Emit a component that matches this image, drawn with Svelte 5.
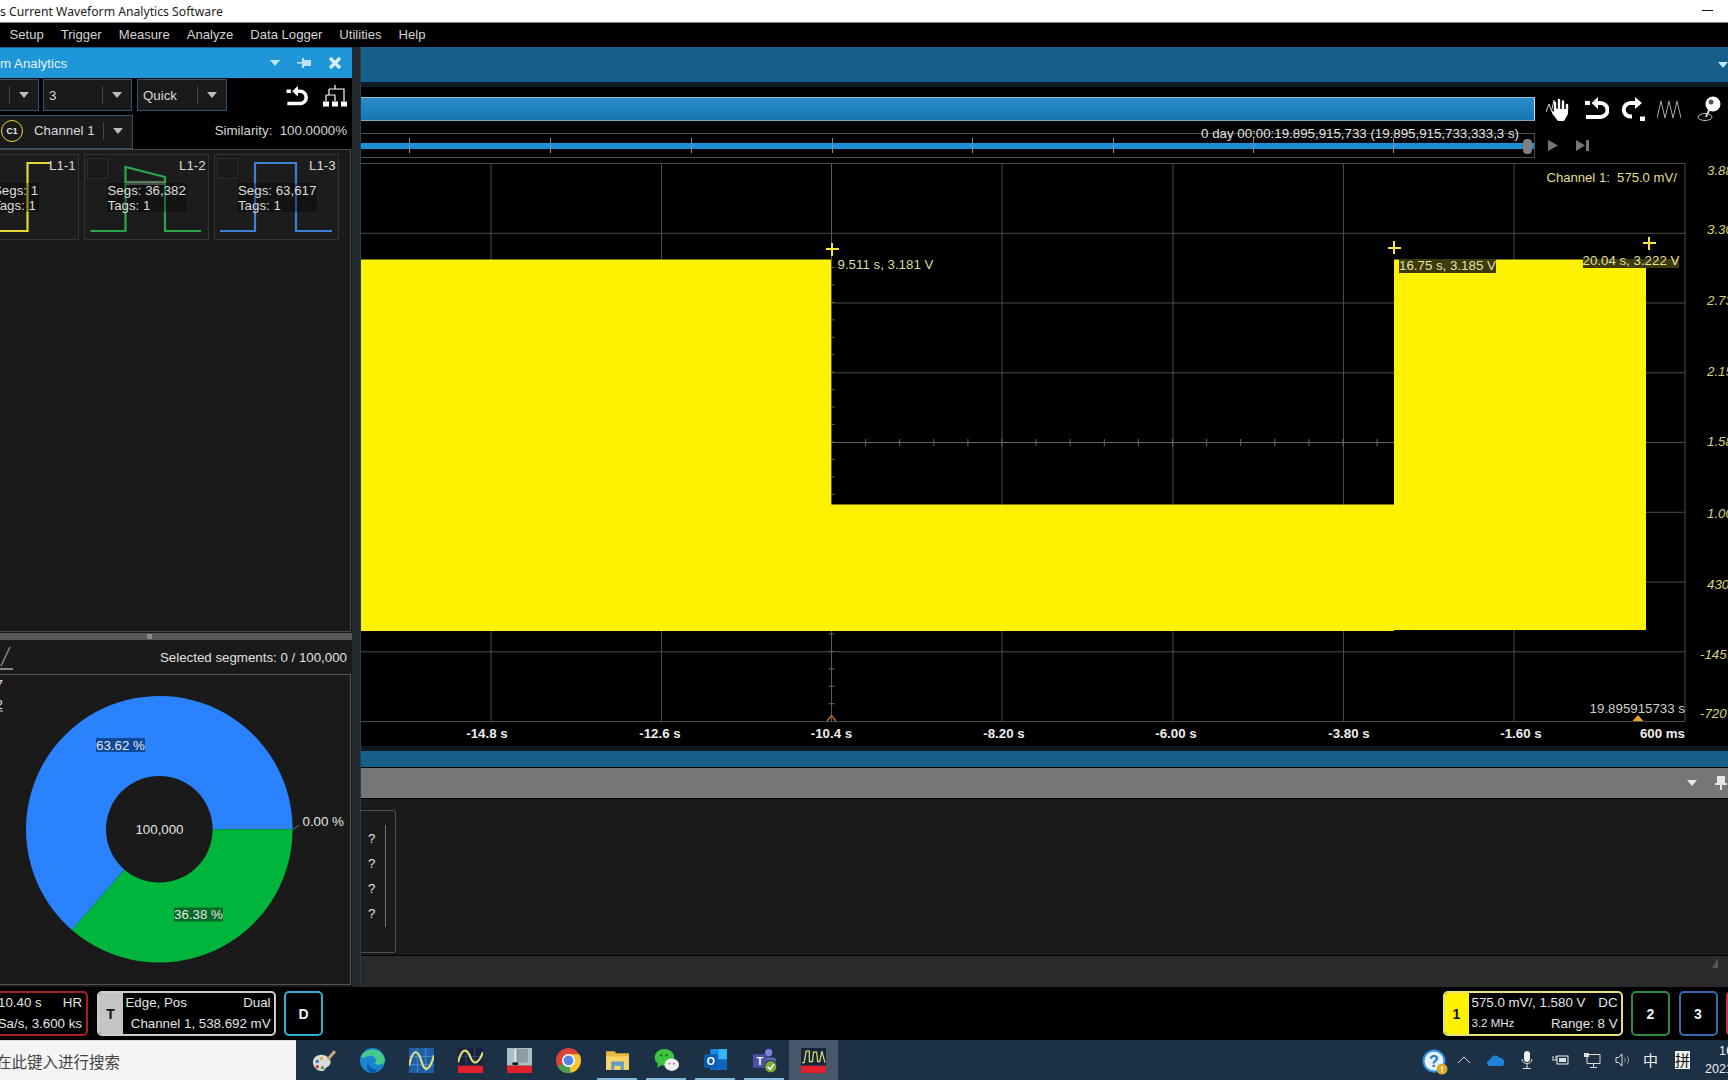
<script>
	const menus = ['Setup', 'Trigger', 'Measure', 'Analyze', 'Data Logger', 'Utilities', 'Help'];

	const thumbs = [
		{ id: 'L1-1', segs: '1', color: '#e6d832', line: 'M6 77H73.5V9H97', left: 38, width: 46 },
		{ id: 'L1-2', segs: '36,382', color: '#2ba64f', line: 'M6.5 77H41.5V13L81 23V77H117', left: 22.5, width: 79 },
		{ id: 'L1-3', segs: '63,617', color: '#3f7fd6', line: 'M6 77H41V9H82V77H118', left: 23, width: 79 }
	];

	// pie, percent of segments from the 3 o'clock point going clockwise
	const cx = 159.3;
	const cy = 155.3;
	const r = 133.3;
	const greenAngle = (36.38 / 100) * 2 * Math.PI;
	const ex = cx + r * Math.cos(greenAngle);
	const ey = cy + r * Math.sin(greenAngle);
	const bluePie = `M${cx + r} ${cy}A${r} ${r} 0 1 0 ${ex} ${ey}L${cx} ${cy}Z`;
	const greenPie = `M${cx + r} ${cy}A${r} ${r} 0 0 1 ${ex} ${ey}L${cx} ${cy}Z`;

	// scope geometry, relative to the plot origin
	const plotRight = 1324;
	const plotBottom = 558;
	const vLines = [130, 300.5, 470.5, 641, 812, 982.5, 1153, 1324];
	const hLines = [0, 69.8, 139.5, 209.3, 279, 348.8, 418.5, 488.3, 558];
	const xLabels = [
		['-14.8 s', 126],
		['-12.6 s', 299],
		['-10.4 s', 470.5],
		['-8.20 s', 643],
		['-6.00 s', 815],
		['-3.80 s', 988],
		['-1.60 s', 1160]
	];
	const yLabels = [
		['3.88 V', 8, 1346],
		['3.30 V', 67, 1346],
		['2.73 V', 138, 1346],
		['2.15 V', 209, 1346],
		['1.58 V', 279, 1346],
		['1.00 V', 351, 1346],
		['430 mV', 422, 1346],
		['-145 mV', 492, 1339],
		['-720 mV', 551, 1339]
	];
	const hTicks = [];
	for (let i = 0; i < 17; i++) hTicks.push(470.5 + i * 34.1);
	const vTicks = [];
	for (let y = 104.5; y < 558; y += 17.45) vTicks.push(y);
	const sliderTicks = [48, 189, 330, 471, 611, 752, 892, 1032];
	const underlined = [2, 3, 4, 5];
</script>

{#snippet dropdown(cls, label)}
	<div class="dropdown {cls}">
		<span class="dd-label">{@render label()}</span>
		<span class="dd-split"></span>
		<span class="dd-arrow"></span>
	</div>
{/snippet}

{#snippet ddEmpty()}{/snippet}
{#snippet ddThree()}3{/snippet}
{#snippet ddQuick()}Quick{/snippet}
{#snippet ddChannel()}<span class="c1">C1</span>Channel 1{/snippet}

{#snippet undoIcon(cls)}
	<svg class={cls} viewBox="0 0 24 24">
		<rect x="0" y="4" width="5" height="4" fill="#fff" />
		<path d="M13 0L6.500 6L13 12Z" fill="#fff" />
		<path d="M11 6H15.500A6.500 6.500 0 0 1 15.500 20H1" fill="none" stroke="#fff" stroke-width="4" />
	</svg>
{/snippet}

<div class="app">
	<header class="titlebar">
		<span>s Current Waveform Analytics Software</span>
		<span class="minimize"></span>
	</header>

	<nav class="menubar">
		{#each menus as m}
			<span>{m}</span>
		{/each}
	</nav>

	<div class="work">
		<aside class="panel">
			<div class="panel-title">
				<span>m Analytics</span>
				<div class="panel-actions">
					<span class="tri-down"></span>
					<svg width="16" height="12" viewBox="0 0 16 12">
						<path d="M0 5H5V6.500H0ZM5 1H7V3H14V9H7V11H5Z" fill="#bfe4f8" />
					</svg>
					<svg width="14" height="14" viewBox="0 0 14 14">
						<path d="M2 2L12 12M12 2L2 12" stroke="#d5eefb" stroke-width="3.400" />
					</svg>
				</div>
			</div>

			<div class="ctl-row first">
				{@render dropdown('dd-a', ddEmpty)}
				{@render dropdown('dd-b', ddThree)}
				{@render dropdown('dd-c', ddQuick)}
				<div class="ctl-icons">
					{@render undoIcon('panel-undo')}
					<svg class="tree" viewBox="0 0 24 22">
						<path d="M12 0V4M6 4H21V16M6 4V10M3 10H12M3 10V16M12 10V16" fill="none" stroke="#fff" stroke-width="1.200" />
						<rect x="0" y="16.500" width="6" height="5" fill="#fff" />
						<rect x="9" y="16.500" width="6" height="5" fill="#fff" />
						<rect x="18" y="16.500" width="6" height="5" fill="#fff" />
					</svg>
				</div>
			</div>

			<div class="ctl-row second">
				{@render dropdown('dd-ch', ddChannel)}
				<span class="similarity">Similarity:&nbsp; 100.0000%</span>
			</div>

			<div class="thumbs">
				{#each thumbs as t}
					<div class="thumb">
						<span class="thumb-check"></span>
						<svg class="thumb-wave" viewBox="0 0 125 86">
							{#if t.id === 'L1-2'}
								<path d="M41.500 29H81" stroke="#5c7a63" stroke-width="4" />
							{/if}
							<path d={t.line} fill="none" stroke={t.color} stroke-width="2.200" />
						</svg>
						<span class="thumb-id">{t.id}</span>
						<div class="thumb-stats" style="left: {t.left}px; width: {t.width}px">
							<div>Segs: {t.segs}</div>
							<div>Tags: 1</div>
						</div>
					</div>
				{/each}
			</div>

			<div class="splitter"><span class="grip"></span></div>

			<div class="seg-row">
				<svg class="seg-icon" width="14" height="26" viewBox="0 0 14 26">
					<path d="M1 21L10 2" stroke="#888" stroke-width="1.500" />
					<path d="M0 24H13" stroke="#888" stroke-width="2" />
				</svg>
				<span>Selected segments: 0 / 100,000</span>
			</div>

			<div class="chart">
				<svg width="351" height="311" viewBox="0 0 351 311">
					<text class="pie-t" x="3" y="15" text-anchor="end">7</text>
					<text class="pie-t" x="3" y="35" text-anchor="end">2</text>
					<path d="M0 37H3" stroke="#ccc" />
					<path d={bluePie} fill="#2a82ff" />
					<path d={greenPie} fill="#00b53c" />
					<circle cx={cx} cy={cy} r="53.300" fill="#1a1a1a" />
					<path d="M293 155.500L299 151" stroke="#777" />
					<rect x="96" y="64" width="49" height="14" fill="#0e4a9a" />
					<rect x="174" y="233.500" width="49" height="14" fill="#006a25" />
					<text class="pie-t" x="96" y="75.500">63.62 %</text>
					<text class="pie-t" x="174" y="245">36.38 %</text>
					<text class="pie-t" x="159.500" y="160" text-anchor="middle">100,000</text>
					<text class="pie-t" x="302.500" y="152">0.00 %</text>
				</svg>
			</div>
		</aside>

		<div class="sep"></div>

		<main class="main">
			<div class="main-head"><span class="tri-down head-arrow"></span></div>
			<div class="band"></div>

			<div class="tools">
				<div class="bars">
					<div class="overview-bar"></div>
					<div class="slider">
						<div class="slider-fill"></div>
						{#each sliderTicks as x}
							<span class="slider-tick" style="left: {x}px"></span>
						{/each}
						<span class="slider-handle"></span>
						<span class="slider-time">0 day 00:00:19.895,915,733 (19.895,915,733,333,3 s)</span>
					</div>
				</div>
				<div class="tool-icons">
					<div class="icon-row">
						<svg class="t-hand" viewBox="0 0 26 25">
							<path d="M0 15L3 7L5.500 14L8 3L10 12" fill="none" stroke="#ccc" stroke-width="1" />
							<path d="M9 13V6M13 12V3M17 12V4.500M21 13V8" stroke="#fff" stroke-width="2.400" stroke-linecap="round" />
							<path d="M8 12H22V17L18 24H12L6.500 17L5 13L8 15Z" fill="#fff" />
						</svg>
						{@render undoIcon('t-undo')}
						<svg class="t-redo" viewBox="0 0 24 24">
							<path d="M15 6H9.500A6.500 6.500 0 0 0 9.500 19.500H11" fill="none" stroke="#fff" stroke-width="4" />
							<path d="M14 0L21 6L14 12Z" fill="#fff" />
							<rect x="19" y="19.500" width="5" height="4.500" fill="#fff" />
						</svg>
						<svg class="t-zig" viewBox="0 0 24 19">
							<path d="M0 18L4 1L8 18L12 1L16 18L20 1L24 18" fill="none" stroke="#aaa" stroke-width="1" />
						</svg>
						<svg class="t-joy" viewBox="0 0 24 26">
							<ellipse cx="8" cy="21" rx="7" ry="3.500" fill="none" stroke="#bbb" stroke-width="1" />
							<path d="M9 21L13 12" stroke="#ccc" stroke-width="2" />
							<circle cx="16" cy="8" r="7.500" fill="#fff" />
							<circle cx="14" cy="6" r="2.500" fill="#555" />
						</svg>
					</div>
					<div class="icon-row small">
						<svg width="10" height="11" viewBox="0 0 10 11"><path d="M0 0L10 5.500L0 11Z" fill="#777" /></svg>
						<svg width="13" height="11" viewBox="0 0 13 11"><path d="M0 0L9 5.500L0 11ZM10 0H13V11H10Z" fill="#777" /></svg>
					</div>
				</div>
			</div>

			<section class="scope">
				<svg class="plot" width="1367" height="583" viewBox="0 0 1367 583">
					{#each vLines as x}
						<path d="M{x} 0V{plotBottom}" stroke="#4c4c4c" />
					{/each}
					{#each hLines as y}
						<path d="M0 {y + 0.5}H{plotRight}" stroke="#4c4c4c" />
					{/each}
					<path d="M470.500 0V{plotBottom}" stroke="#5a5a5a" />
					<path d="M470 279.500H1033" stroke="#666" />
					{#each hTicks as x}
						<path d="M{x} 276V283" stroke="#666" />
					{/each}
					{#each vTicks as y}
						<path d="M467.500 {y}H473.500" stroke="#666" />
					{/each}
					<path d="M0 96.500H470V341.500H1033V96.500H1285V467H1033V468H0Z" fill="#fff200" />
					<path d="M466 558L470.500 552.500L475 558" fill="none" stroke="#b8702a" stroke-width="1.400" />
					<path d="M1271.500 558L1277 552L1282.500 558Z" fill="#e8a030" />
				</svg>

				{#each xLabels as [text, x]}
					<span class="x-label" style="left: {x}px">{text}</span>
				{/each}
				<span class="x-label end">600 ms</span>

				{#each yLabels as [text, y, x]}
					<span class="y-label" style="top: {y - 8}px; left: {x}px">{text}</span>
				{/each}

				<span class="ch-scale">Channel 1:&nbsp; 575.0 mV/</span>
				<span class="time-stamp">19.895915733 s</span>

				<span class="cursor c-a"></span>
				<span class="cursor c-b"></span>
				<span class="cursor c-c"></span>
				<span class="marker m-a">9.511 s, 3.181 V</span>
				<span class="marker m-b">16.75 s, 3.185 V</span>
				<span class="marker m-c">20.04 s, 3.222 V</span>
			</section>

			<div class="band low"></div>
			<div class="blue-strip"></div>
			<div class="gray-head">
				<span class="tri-down"></span>
				<svg width="12" height="14" viewBox="0 0 12 14">
					<path d="M2 0H10V7H12V9H7V14H5V9H0V7H2Z" fill="#e6e6e6" />
				</svg>
			</div>
			<div class="log-body">
				<div class="qbox">
					<div class="qs">
						<span>?</span><span>?</span><span>?</span><span>?</span>
					</div>
					<span class="qline"></span>
				</div>
			</div>
			<div class="log-foot"><span class="foot-grip"></span></div>
		</main>
	</div>

	<footer class="statusbar">
		<div class="status-group left">
			<div class="chip acq">
				<div class="chip-line"><span class="acq-time">10.40 s</span><span>HR</span></div>
				<div class="chip-line end"><span>Sa/s, 3.600 ks</span></div>
			</div>
			<div class="chip trig">
				<span class="tab gray">T</span>
				<div class="chip-text">
					<div class="chip-line"><span>Edge, Pos</span><span>Dual</span></div>
					<div class="chip-line end"><span>Channel 1, 538.692 mV</span></div>
				</div>
			</div>
			<div class="ch-btn cyan">D</div>
		</div>
		<div class="status-group right">
			<div class="chip ch1">
				<span class="tab yellow">1</span>
				<div class="chip-text">
					<div class="chip-line"><span>575.0 mV/, 1.580 V</span><span>DC</span></div>
					<div class="chip-line"><span class="mhz">3.2 MHz</span><span>Range: 8 V</span></div>
				</div>
			</div>
			<div class="ch-btn green">2</div>
			<div class="ch-btn blue">3</div>
			<div class="ch-btn red">4</div>
		</div>
	</footer>

	<footer class="taskbar">
		<div class="search">在此键入进行搜索</div>
		<div class="task-icons">
			<span class="task">
				<svg viewBox="0 0 24 24">
					<path d="M2 15C1 9 7 5 13 7C19 9 21 15 16 18C12 20 14 23 9 22C5 21 3 19 2 15Z" fill="#d9dbd8" />
					<path d="M15 10L22 2L24 4L17 12Z" fill="#c8a878" />
					<circle cx="6" cy="13" r="1.700" fill="#3d7ac0" /><circle cx="10" cy="10" r="1.700" fill="#e0b040" />
					<circle cx="6" cy="18" r="1.700" fill="#c84040" /><circle cx="11" cy="19" r="1.700" fill="#50a050" />
				</svg>
			</span>
			<span class="task">
				<svg viewBox="0 0 24 24">
					<circle cx="12" cy="12" r="12" fill="#1b84d0" />
					<path d="M1 9C4 -1 22 -2 24 12C24 16 17 17 14 15C18 10 12 6 8 8C5 9 3 10 1 9Z" fill="#46c98a" />
					<path d="M8 14C8 19 13 21 17 20L14 24C8 24 5 19 8 14Z" fill="#0d5aa8" />
				</svg>
			</span>
			<span class="task">
				<svg viewBox="0 0 24 24">
					<rect width="24" height="24" fill="#1d5fa6" />
					<path d="M0 8H24M0 16H24M8 0V24M16 0V24" stroke="#5f97cf" stroke-width="0.700" />
					<path d="M0 17C4 -1 9 2 12 13C15 24 20 22 24 7" fill="none" stroke="#e9e27a" stroke-width="2" />
				</svg>
			</span>
			<span class="task">
				<svg viewBox="0 0 24 24">
					<rect width="24" height="17" fill="#16233c" />
					<path d="M0 8H24M8 0V17M16 0V17" stroke="#3a5a80" stroke-width="0.700" />
					<rect y="17" width="24" height="7" fill="#e2202c" />
					<path d="M0 14C4 -2 9 1 12 9C15 17 20 15 24 4" fill="none" stroke="#e9e27a" stroke-width="2" />
				</svg>
			</span>
			<span class="task">
				<svg viewBox="0 0 24 24">
					<rect width="24" height="17" fill="#a9c0c8" />
					<rect x="9" y="1" width="11" height="13" fill="#8d9b9e" />
					<path d="M8 1V14" stroke="#eee" stroke-width="1.500" />
					<ellipse cx="8" cy="15" rx="3" ry="1.500" fill="#222" />
					<rect y="17" width="24" height="7" fill="#e2202c" />
				</svg>
			</span>
			<span class="task">
				<svg viewBox="0 0 24 24">
					<circle cx="12" cy="12" r="12" fill="#d8433a" />
					<path d="M12 12L1.600 18A12 12 0 0 0 14 23.800Z" fill="#4aa154" />
					<path d="M12 6H22.400A12 12 0 0 1 14 23.800L12 12Z" fill="#f5c52f" />
					<circle cx="12" cy="12" r="5.500" fill="#4f86ec" stroke="#fff" stroke-width="1.500" />
				</svg>
			</span>
			<span class="task">
				<svg viewBox="0 0 24 24">
					<path d="M1 3H9L11 5H23V21H1Z" fill="#e8b93f" />
					<rect x="1" y="8" width="22" height="13" fill="#f6d469" />
					<rect x="6" y="13" width="12" height="8" fill="#5d9ac4" />
					<rect x="9" y="17" width="6" height="4" fill="#f6d469" />
				</svg>
			</span>
			<span class="task">
				<svg viewBox="0 0 24 24">
					<ellipse cx="10" cy="9" rx="9.500" ry="8" fill="#3cc43c" />
					<path d="M4 14L3 19L8 16Z" fill="#3cc43c" />
					<ellipse cx="17" cy="16" rx="7" ry="6" fill="#f0f0f0" />
					<circle cx="7" cy="7" r="1.100" fill="#145214" /><circle cx="12" cy="7" r="1.100" fill="#145214" />
					<circle cx="15" cy="15" r="0.900" fill="#777" /><circle cx="19" cy="15" r="0.900" fill="#777" />
				</svg>
			</span>
			<span class="task">
				<svg viewBox="0 0 24 24">
					<rect x="7" y="1" width="16" height="20" fill="#1a8ae8" />
					<rect x="15" y="1" width="8" height="10" fill="#35b6f2" />
					<rect x="7" y="11" width="16" height="10" fill="#1064c0" />
					<rect x="1" y="6" width="13" height="13" fill="#0a5cb0" />
					<text x="7.500" y="16.500" class="glyph">O</text>
				</svg>
			</span>
			<span class="task">
				<svg viewBox="0 0 24 24">
					<circle cx="16" cy="4.500" r="3.500" fill="#7f85d8" />
					<rect x="11" y="9" width="12" height="11" rx="3" fill="#6268c4" />
					<rect x="1" y="6" width="13" height="13" fill="#4b51ad" />
					<text x="7.500" y="16.500" class="glyph">T</text>
					<circle cx="18" cy="18" r="6" fill="#7aa83c" stroke="#1c3247" />
					<path d="M15 18L17.500 20.500L21 15.500" fill="none" stroke="#fff" stroke-width="1.500" />
				</svg>
			</span>
			<span class="task active">
				<svg viewBox="0 0 24 24">
					<rect width="24" height="17" fill="#16233c" />
					<rect y="17" width="24" height="7" fill="#e2202c" />
					<path d="M1 14H3L5 3H8V13H11L12 4H15L16 13H18L20 3L23 14" fill="none" stroke="#e0d86a" stroke-width="1.200" />
				</svg>
			</span>
			{#each underlined as i}
				<span class="underline u{i}"></span>
			{/each}
		</div>

		<div class="tray">
			<svg class="tray-help" width="26" height="26" viewBox="0 0 26 26">
				<circle cx="12" cy="12" r="10.500" fill="#e8f2fa" stroke="#2d8fe0" stroke-width="2" />
				<text x="12" y="18" class="help-q" text-anchor="middle">?</text>
				<circle cx="20" cy="20" r="5.500" fill="#e0a828" />
				<path d="M20 17V21M20 22V23.500" stroke="#fff" stroke-width="1.300" />
			</svg>
			<svg class="caret" width="14" height="8" viewBox="0 0 14 8"><path d="M1 7L7 1L13 7" fill="none" stroke="#ddd" stroke-width="1" /></svg>
			<svg class="drive" width="18" height="12" viewBox="0 0 18 12"><path d="M3 12C-1 12 -1 6 3 6C4 1 11 0 12 4C16 3 19 8 16 12Z" fill="#1d83d6" /></svg>
			<svg class="mic" width="12" height="18" viewBox="0 0 12 18">
				<rect x="3" y="0" width="6" height="11" rx="3" fill="#f0f0f0" />
				<path d="M1 8C1 14 11 14 11 8M6 13V17M2 17.500H10" fill="none" stroke="#ddd" stroke-width="1" />
			</svg>
			<svg class="batt" width="17" height="12" viewBox="0 0 17 12">
				<rect x="5" y="2" width="11" height="8" fill="none" stroke="#eee" stroke-width="1" />
				<rect x="7" y="4" width="7" height="4" fill="#ddd" />
				<path d="M0 6H5M1 2V5M4 2V5" stroke="#eee" stroke-width="1" />
			</svg>
			<svg class="net" width="17" height="15" viewBox="0 0 17 15">
				<path d="M3 1.500H16V10.500H3ZM9.500 10.500V14M6 14.500H13" fill="none" stroke="#ddd" stroke-width="1" />
				<rect x="0" y="0" width="5" height="4" fill="#ddd" />
			</svg>
			<svg class="vol" width="16" height="14" viewBox="0 0 16 14">
				<path d="M1 4.500H3.500L7 1V13L3.500 9.500H1Z" fill="none" stroke="#ddd" stroke-width="1" />
				<path d="M9.500 4.500C10.500 6 10.500 8 9.500 9.500M12 2.500C14 5 14 9 12 11.500" fill="none" stroke="#8a9aa8" stroke-width="1" />
			</svg>
			<span class="zh">中</span>
			<span class="pin">拼</span>
			<div class="clock"><span>16:14</span><span>2021/8/6</span></div>
		</div>
	</footer>
</div>

<style>
	:global(body) {
		margin: 0;
		background: #000;
	}

	.app {
		width: 1728px;
		height: 1080px;
		display: flex;
		flex-direction: column;
		overflow: hidden;
		background: #000;
		color: #ddd;
		font-family: "Liberation Sans", Arial, sans-serif;
		font-size: 13.3px;
	}

	/* top bars */
	.titlebar {
		height: 23px;
		box-sizing: border-box;
		flex: none;
		display: flex;
		align-items: center;
		justify-content: space-between;
		background: #fff;
		color: #222;
		font-family: "Noto Sans", sans-serif;
		font-size: 12.2px;
		border-bottom: 1px solid #888;
	}

	.minimize {
		width: 11px;
		height: 1px;
		background: #111;
		margin: 0 15px 2px 0;
	}

	.menubar {
		height: 24px;
		box-sizing: border-box;
		flex: none;
		display: flex;
		align-items: center;
		gap: 17px;
		padding: 0 0 1px 9.5px;
		color: #d4d4d4;
		font-size: 13.1px;
	}

	.work {
		height: 940px;
		flex: none;
		display: flex;
	}

	/* left dock */
	.panel {
		width: 352px;
		flex: none;
		display: flex;
		flex-direction: column;
		overflow: hidden;
		background: #1a1a1a;
	}

	.panel-title {
		height: 31px;
		flex: none;
		display: flex;
		align-items: center;
		justify-content: space-between;
		background: linear-gradient(#155f8a 1px, #1e96d8 1px);
		color: #e4f2fa;
		font-size: 13.3px;
		box-sizing: border-box;
		padding-top: 1px;
	}

	.panel-actions {
		display: flex;
		align-items: center;
		gap: 15px;
		padding-right: 10px;
	}

	.panel-actions .tri-down {
		margin-right: 2px;
	}

	.tri-down {
		width: 0;
		height: 0;
		border-left: 5px solid transparent;
		border-right: 5px solid transparent;
		border-top: 6px solid #bfe4f8;
	}

	.ctl-row {
		display: flex;
		flex: none;
		background: #000;
		box-sizing: border-box;
	}

	.ctl-row.first {
		height: 35px;
		padding-top: 1px;
		gap: 5px;
	}

	.ctl-row.second {
		height: 36px;
		padding-top: 2px;
		align-items: flex-start;
		justify-content: space-between;
	}

	.dropdown {
		height: 32px;
		box-sizing: border-box;
		display: flex;
		align-items: center;
		background: #1a1a1a;
		border: 1px solid #2d5674;
		color: #d8d8d8;
		flex: none;
	}

	.dd-a {
		width: 39px;
		border-left: none;
	}

	.dd-b {
		width: 89px;
		margin-left: -1px;
	}

	.dd-c {
		width: 90px;
	}

	.dd-ch {
		width: 133px;
		height: 34px;
		padding-bottom: 3px;
		border-left: none;
	}

	.dd-label {
		flex: 1;
		display: flex;
		align-items: center;
		padding-left: 5px;
		white-space: nowrap;
	}

	.dd-ch .dd-label {
		padding-left: 1px;
	}

	.dd-split {
		width: 1px;
		height: 18px;
		background: #444;
	}

	.dd-arrow {
		width: 0;
		height: 0;
		margin: 0 9px 0 9px;
		border-left: 5px solid transparent;
		border-right: 5px solid transparent;
		border-top: 6px solid #bbb;
	}

	.c1 {
		width: 22px;
		height: 22px;
		box-sizing: border-box;
		margin-right: 11px;
		border: 1.5px solid #e6d832;
		border-radius: 50%;
		display: flex;
		align-items: center;
		justify-content: center;
		flex: none;
		font-size: 8.5px;
		font-weight: bold;
		color: #eee;
	}

	.ctl-icons {
		margin-left: auto;
		display: flex;
		align-items: center;
		gap: 15px;
		padding: 6px 5px 0 0;
		height: 22px;
	}

	.panel-undo {
		width: 22px;
		height: 21px;
	}

	.tree {
		width: 24px;
		height: 22px;
	}

	.similarity {
		padding: 8px 5px 0 0;
		color: #d4d4d4;
	}

	.thumbs {
		flex: 1;
		min-height: 0;
		width: 351px;
		box-sizing: border-box;
		border: 1px solid #4a4a4a;
		border-left: none;
		padding-top: 4px;
		display: flex;
		gap: 5.3px;
		align-items: flex-start;
	}

	.thumb {
		position: relative;
		width: 124.7px;
		height: 86px;
		flex: none;
		box-sizing: border-box;
		border: 1px solid #333;
		background: #1c1c1c;
	}

	.thumb:first-child {
		margin-left: -46px;
	}

	.thumb-check {
		position: absolute;
		top: 3px;
		left: 2px;
		width: 19px;
		height: 19px;
		border: 1px solid #2c2c2c;
		background: #1a1a1a;
	}

	.thumb-wave {
		position: absolute;
		top: -1px;
		left: -1px;
		width: 125px;
		height: 86px;
	}

	.thumb-id {
		position: absolute;
		top: 3px;
		right: 2px;
		color: #ddd;
	}

	.thumb-stats {
		position: absolute;
		top: 28px;
		height: 29px;
		line-height: 15px;
		white-space: nowrap;
		background: rgba(0, 0, 0, 0.35);
		color: #ddd;
	}

	.splitter {
		height: 7px;
		flex: none;
		margin-top: 1px;
		background: #585858;
		position: relative;
	}

	.grip {
		position: absolute;
		left: 147px;
		top: 1px;
		width: 5px;
		height: 5px;
		background: #8a8a8a;
	}

	.seg-row {
		height: 34px;
		flex: none;
		display: flex;
		align-items: center;
		justify-content: space-between;
		padding-right: 5px;
		color: #e0e0e0;
	}

	.seg-icon {
		margin-top: 2px;
	}

	.chart {
		height: 311px;
		flex: none;
		width: 351px;
		box-sizing: border-box;
		border: 1px solid #555;
		border-left: none;
		margin-bottom: 2px;
	}

	.chart svg {
		display: block;
		margin-top: -1px;
	}

	.pie-t {
		font-family: "Liberation Sans", Arial, sans-serif;
		font-size: 13.3px;
		fill: #e6e6e6;
	}

	.sep {
		width: 9px;
		flex: none;
		background: #23292d;
		border-right: 1px solid #1f4058;
		box-sizing: border-box;
	}

	/* main column */
	.main {
		flex: 1;
		min-width: 0;
		display: flex;
		flex-direction: column;
	}

	.main-head {
		height: 35px;
		flex: none;
		background: #155f8a;
		position: relative;
	}

	.head-arrow {
		position: absolute;
		right: 0;
		top: 15px;
	}

	.band {
		height: 5px;
		flex: none;
		background: #0e1a22;
	}

	.tools {
		height: 76px;
		flex: none;
		display: flex;
	}

	.bars {
		width: 1174px;
		flex: none;
		padding-top: 9.5px;
	}

	.overview-bar {
		height: 24px;
		box-sizing: border-box;
		border-top: 1px solid #9ab8c8;
		border-bottom: 1px solid #8ea8b8;
		border-right: 1px solid #cfe0ea;
		background: linear-gradient(#2a8ecb, #1676b0);
	}

	.slider {
		position: relative;
		height: 25px;
		margin-top: 12.5px;
		box-sizing: border-box;
		border-top: 1px solid #4d4d4d;
		border-bottom: 1px solid #4d4d4d;
		border-right: 1px solid #4d4d4d;
	}

	.slider-fill {
		position: absolute;
		left: 0;
		right: 0;
		top: 9px;
		height: 6px;
		background: #1c8fd6;
	}

	.slider-tick {
		position: absolute;
		top: 4px;
		width: 1px;
		height: 15px;
		background: #8a8a8a;
	}

	.slider-handle {
		position: absolute;
		right: 2px;
		top: 5px;
		width: 9px;
		height: 15px;
		background: #808080;
		border-radius: 4px;
	}

	.slider-time {
		position: absolute;
		right: 15px;
		top: -9px;
		line-height: 17px;
		color: #e4e4e4;
		white-space: nowrap;
		font-size: 13.3px;
	}

	.tool-icons {
		flex: 1;
		padding-top: 9.5px;
	}

	.icon-row {
		display: flex;
		align-items: center;
		height: 25px;
	}

	.icon-row.small {
		margin-top: 18px;
		height: 12px;
		padding-left: 13px;
		gap: 18px;
	}

	.t-hand {
		width: 26px;
		height: 25px;
		margin-left: 11px;
	}

	.t-undo {
		width: 24px;
		height: 24px;
		margin-left: 13px;
	}

	.t-redo {
		width: 24px;
		height: 24px;
		margin-left: 12px;
	}

	.t-zig {
		width: 24px;
		height: 19px;
		margin-left: 12px;
	}

	.t-joy {
		width: 24px;
		height: 26px;
		margin-left: 16px;
	}

	.scope {
		position: relative;
		height: 583px;
		flex: none;
		overflow: hidden;
	}

	.plot {
		display: block;
		position: absolute;
		left: 0;
		top: 0;
	}

	.x-label {
		position: absolute;
		top: 563px;
		transform: translateX(-50%);
		font-weight: bold;
		font-size: 13.3px;
		line-height: 16px;
		color: #eee;
		white-space: nowrap;
	}

	.x-label.end {
		left: auto;
		right: 43px;
		transform: none;
	}

	.y-label {
		position: absolute;
		font-style: italic;
		line-height: 16px;
		color: #d8d27e;
		white-space: nowrap;
	}

	.ch-scale {
		position: absolute;
		top: 7px;
		left: 1185.5px;
		line-height: 16px;
		color: #e6df90;
		white-space: nowrap;
		font-size: 13.1px;
	}

	.time-stamp {
		position: absolute;
		top: 538px;
		right: 43px;
		line-height: 16px;
		color: #cfcfcf;
		white-space: nowrap;
	}

	.cursor {
		position: absolute;
		width: 13px;
		height: 13px;
		background:
			linear-gradient(#f5e83a, #f5e83a) center / 100% 2px no-repeat,
			linear-gradient(#f5e83a, #f5e83a) center / 2px 100% no-repeat;
	}

	.c-a {
		left: 464.5px;
		top: 79.5px;
	}

	.c-b {
		left: 1026.5px;
		top: 78px;
	}

	.c-c {
		left: 1281.5px;
		top: 73.5px;
	}

	.marker {
		position: absolute;
		line-height: 14px;
		color: #dcdca0;
		white-space: nowrap;
	}

	.m-a {
		left: 476.5px;
		top: 95px;
	}

	.m-b {
		left: 1038px;
		top: 96px;
		background: #3d3a10;
		color: #e6e29a;
	}

	.m-c {
		left: 1221.5px;
		top: 91px;
		height: 14px;
		background: linear-gradient(#000 5px, #3d3a10 5px);
		color: #e6e29a;
	}

	.blue-strip {
		height: 17px;
		box-sizing: border-box;
		flex: none;
		background: #155f8a;
		border-bottom: 1px solid #000;
	}

	.gray-head {
		height: 31px;
		box-sizing: border-box;
		flex: none;
		background: #767676;
		border-bottom: 1px solid #000;
		display: flex;
		align-items: center;
		justify-content: flex-end;
		gap: 18px;
		padding-right: 1px;
	}

	.gray-head .tri-down {
		border-top-color: #e8e8e8;
	}

	.log-body {
		flex: 1;
		min-height: 0;
		background: #1a1a1a;
		border-bottom: 1px solid #000;
		padding-top: 11px;
		box-sizing: border-box;
	}

	.qbox {
		width: 35px;
		height: 143px;
		box-sizing: border-box;
		border: 1.5px solid #505050;
		border-left: none;
		border-radius: 0 3px 3px 0;
		position: relative;
	}

	.qs {
		display: flex;
		flex-direction: column;
		position: absolute;
		left: 7px;
		top: 15px;
		color: #e4e4e4;
		line-height: 25px;
	}

	.qline {
		position: absolute;
		left: 24px;
		top: 14px;
		width: 1px;
		height: 102px;
		background: #777;
	}

	.log-foot {
		height: 31px;
		flex: none;
		background: #2a2a2a;
		position: relative;
	}

	.foot-grip {
		position: absolute;
		left: 1351px;
		top: 2px;
		width: 0;
		height: 0;
		border-left: 6px solid transparent;
		border-bottom: 10px solid #555;
	}

	/* status strip */
	.statusbar {
		height: 53px;
		flex: none;
		display: flex;
		justify-content: space-between;
		box-sizing: border-box;
		padding-top: 4px;
	}

	.status-group {
		display: flex;
		gap: 8.5px;
		height: 45px;
		flex: none;
	}

	.status-group.left {
		margin-left: -12px;
	}

	.status-group.right {
		margin-right: -37px;
	}

	.chip {
		box-sizing: border-box;
		height: 45px;
		border-radius: 5px;
		border: 2px solid #ccc;
		display: flex;
		overflow: hidden;
		color: #e4e4e4;
	}

	.chip.acq {
		width: 100px;
		border-color: #a82020;
		flex-direction: column;
		padding: 0 4px;
	}

	.acq-time {
		padding-left: 4px;
	}

	.chip.trig {
		width: 179px;
	}

	.chip.ch1 {
		width: 180px;
		border-color: #e8e07a;
	}

	.tab {
		flex: none;
		display: flex;
		align-items: center;
		justify-content: center;
		color: #111;
		font-weight: bold;
		font-size: 14px;
	}

	.tab.gray {
		width: 24px;
		background: #c4c4c4;
	}

	.tab.yellow {
		width: 24px;
		background: #fff200;
	}

	.chip-text {
		flex: 1;
		min-width: 0;
		padding: 0 3px;
	}

	.chip-line {
		display: flex;
		justify-content: space-between;
		line-height: 21px;
		white-space: nowrap;
	}

	.chip-line:first-child {
		margin-top: -1px;
	}

	.chip-line.end {
		justify-content: flex-end;
	}

	.mhz {
		font-size: 11.5px;
	}

	.ch-btn {
		width: 39px;
		height: 45px;
		flex: none;
		box-sizing: border-box;
		border-radius: 5px;
		border: 2px solid #888;
		display: flex;
		align-items: center;
		justify-content: center;
		font-weight: bold;
		font-size: 14px;
		color: #f0f0f0;
	}

	.ch-btn.cyan {
		border-color: #2fb0cf;
	}

	.ch-btn.green {
		border-color: #2d8a45;
	}

	.ch-btn.blue {
		border-color: #3a68b0;
	}

	.ch-btn.red {
		border-color: #c83048;
	}

	/* windows taskbar */
	.taskbar {
		height: 40px;
		flex: none;
		display: flex;
		background: #1c3145;
		font-family: "Noto Sans CJK SC", "Noto Sans", sans-serif;
	}

	.search {
		width: 296px;
		flex: none;
		box-sizing: border-box;
		background: #f4f4f4;
		color: #444;
		font-size: 15.5px;
		line-height: 40px;
		text-indent: -4px;
		white-space: nowrap;
		overflow: hidden;
		border-top: 1px solid #d8d8d8;
	}

	.task-icons {
		position: relative;
		display: flex;
		flex: none;
		padding-left: 3px;
	}

	.task {
		width: 49px;
		height: 40px;
		display: flex;
		align-items: center;
		justify-content: center;
	}

	.task svg {
		width: 25px;
		height: 25px;
	}

	.task.active {
		background: #46586a;
	}

	.glyph {
		font-family: "Liberation Sans", Arial, sans-serif;
		font-size: 10px;
		font-weight: bold;
		fill: #fff;
		text-anchor: middle;
	}

	.underline {
		position: absolute;
		bottom: 0;
		height: 2px;
		width: 40px;
		background: #86b8de;
	}

	.u2 {
		left: 301px;
	}

	.u3 {
		left: 350px;
	}

	.u4 {
		left: 399px;
	}

	.u5 {
		left: 448px;
	}

	.tray {
		flex: none;
		display: flex;
		align-items: center;
		margin-left: 584px;
		height: 40px;
		white-space: nowrap;
	}

	.help-q {
		font-family: "Liberation Sans", Arial, sans-serif;
		font-size: 16px;
		font-weight: bold;
		fill: #1f78c8;
	}

	.tray svg {
		flex: none;
	}

	.tray-help {
		margin-top: 4px;
	}

	.caret {
		margin-left: 9px;
	}

	.drive {
		margin-left: 16px;
	}

	.mic {
		margin-left: 16px;
	}

	.batt {
		margin-left: 19px;
	}

	.net {
		margin-left: 15px;
	}

	.vol {
		margin-left: 14px;
	}

	.zh,
	.pin {
		flex: none;
		width: 15px;
		color: #f0f0f0;
		font-size: 15px;
		line-height: 18px;
		text-align: center;
	}

	.zh {
		margin-left: 12px;
	}

	.pin {
		margin-left: 17px;
		background: #f0f0f0;
		color: #111;
	}

	.clock {
		flex: none;
		margin-left: 15px;
		display: flex;
		flex-direction: column;
		align-items: flex-start;
		font-family: "Liberation Sans", Arial, sans-serif;
		font-size: 12.5px;
		line-height: 18px;
		color: #eee;
	}

	.clock span:first-child {
		padding-left: 14px;
	}
</style>
